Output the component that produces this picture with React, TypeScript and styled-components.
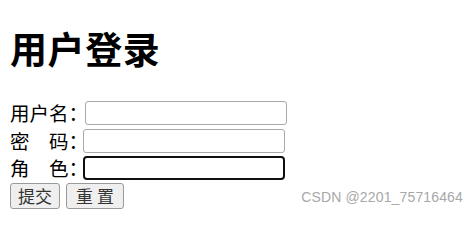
import React from "react";
import styled, { createGlobalStyle } from "styled-components";

const Global = createGlobalStyle`
  html, body { margin: 0; padding: 0; background: #ffffff; }
  body { font-family: "Noto Sans CJK SC", "Noto Sans", sans-serif; color: #000; }
`;

const Page = styled.div`
  position: relative;
  width: 474px;
  height: 241px;
  padding: 0 10px;
  box-sizing: border-box;
  overflow: hidden;
`;

const Title = styled.h1`
  margin: 0;
  padding-top: 26px;
  font-size: 37px;
  line-height: 44px;
  font-weight: 700;
  letter-spacing: 0.6px;
`;

const Form = styled.form`
  margin-top: 31px;
  display: flex;
  flex-direction: column;
  gap: 3.5px;
`;

const Row = styled.div`
  display: flex;
  align-items: center;
  height: 24px;
`;

const Label = styled.label<{ $pad?: number }>`
  font-size: 19.5px;
  line-height: 24px;
  white-space: pre;
  width: ${(p) => 73 + (p.$pad ?? 0)}px;
  flex: none;
`;

const Input = styled.input<{ $focused?: boolean }>`
  box-sizing: border-box;
  width: 202px;
  height: 24px;
  margin: 0;
  padding: 0 4px;
  border: 1px solid #a9a9a9;
  border-radius: 3px;
  background: #fff;
  outline: none;
  font-size: 16px;
  ${(p) =>
    p.$focused &&
    `
    border: 2px solid #101010;
    border-radius: 4px;
  `}
`;

const Buttons = styled.div`
  display: flex;
  gap: 6px;
  margin-top: -1px;
`;

const Button = styled.button<{ $w: number }>`
  box-sizing: border-box;
  width: ${(p) => p.$w}px;
  height: 26px;
  margin: 0;
  padding: 0;
  border: 1px solid #9a9a9a;
  border-radius: 3px;
  background: #efefef;
  color: #333;
  font-family: "Noto Sans CJK SC", sans-serif;
  font-size: 17px;
  line-height: 24px;
  white-space: pre;
`;

const Watermark = styled.div`
  position: absolute;
  right: 11px;
  top: 189px;
  font-family: "Liberation Sans", Arial, sans-serif;
  font-size: 14px;
  color: #a8a8a8;
  letter-spacing: 0.15px;
`;

export default function App() {
  return (
    <>
      <Global />
      <Page>
        <Title>用户登录</Title>
        <Form onSubmit={(e) => e.preventDefault()}>
          <Row>
            <Label $pad={2}>用户名：</Label>
            <Input type="text" />
          </Row>
          <Row>
            <Label>密　码：</Label>
            <Input type="password" />
          </Row>
          <Row>
            <Label>角　色：</Label>
            <Input type="text" $focused />
          </Row>
          <Buttons>
            <Button type="submit" $w={50}>提交</Button>
            <Button type="reset" $w={58}>重 置</Button>
          </Buttons>
        </Form>
        <Watermark>CSDN @2201_75716464</Watermark>
      </Page>
    </>
  );
}
